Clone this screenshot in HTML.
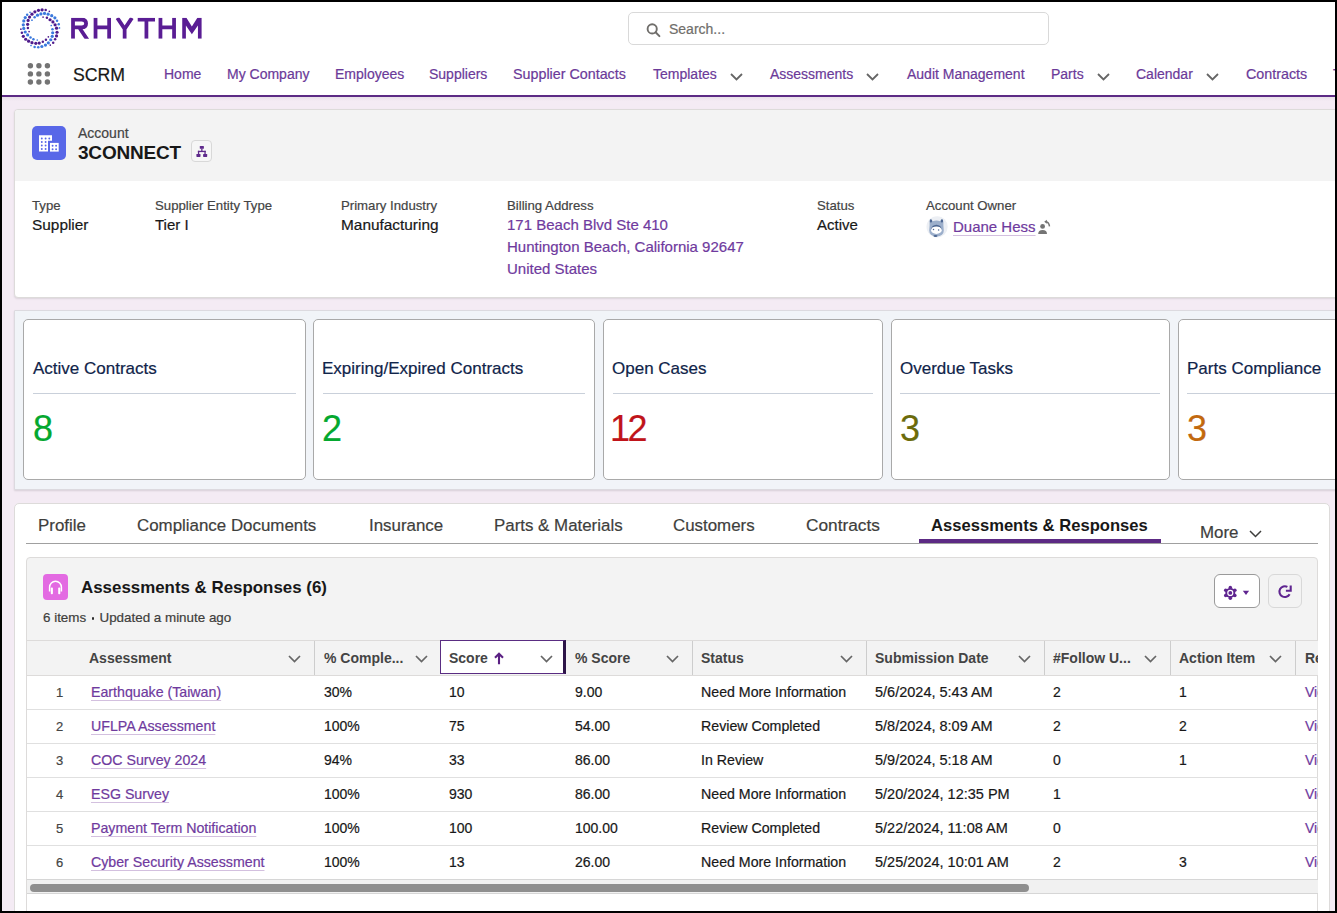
<!DOCTYPE html>
<html><head><meta charset="utf-8">
<style>
*{box-sizing:border-box;margin:0;padding:0}
html,body{width:1337px;height:913px;overflow:hidden;background:#f4ebf4}
body{font-family:"Liberation Sans",sans-serif;color:#181818;position:relative;-webkit-text-stroke:0.2px currentColor}
.th,[style*="bold"]{-webkit-text-stroke:0}
.a{position:absolute;white-space:nowrap}
.nav{position:absolute;top:66px;font-size:14px;color:#6b3a99;line-height:16px;white-space:nowrap}
.chev{position:absolute;width:13px;height:8px}
.lbl{position:absolute;font-size:13.2px;color:#444;line-height:15px;white-space:nowrap}
.val{position:absolute;font-size:15px;color:#181818;line-height:17px;white-space:nowrap}
.lnk{color:#6f3a9e}
.mc{position:absolute;top:319px;height:161px;background:#fff;border:1px solid #a9a9a9;border-radius:5px}
.mt{position:absolute;left:9px;top:40px;font-size:17px;color:#10244a;white-space:nowrap;line-height:18px}
.md{position:absolute;left:9px;right:9px;top:73px;height:1px;background:#c9d0da}
.mn{position:absolute;left:9px;top:90px;font-size:36px;line-height:38px}
.tab{position:absolute;top:516px;font-size:16.9px;color:#3e3e3c;line-height:19px;white-space:nowrap}
.th{position:absolute;top:650px;font-size:14px;font-weight:bold;color:#444;line-height:16px;white-space:nowrap}
.td{position:absolute;font-size:14px;color:#181818;line-height:16px;white-space:nowrap}
.td.lnk{color:#6f3a9e}
.rn{position:absolute;font-size:13px;color:#444;line-height:15px}
.ul{text-decoration:underline;text-decoration-color:#d3c0df;text-underline-offset:3px}
.vd{position:absolute;top:641px;width:1px;height:34px;background:#cdcdcd}
.hl{position:absolute;left:26px;width:1292px;height:1px;background:#e0e0e0}
.bb{position:absolute;background:#000;z-index:100}
</style></head><body>
<div class="a" style="left:0;top:0;width:1337px;height:95px;background:#fff"></div>
<div class="a" style="left:0;top:95px;width:1337px;height:2px;background:#5c2a84"></div>
<div class="a" style="left:0;top:97px;width:1337px;height:4px;background:linear-gradient(#e8dfe8,#f4ebf4)"></div>
<svg class="a" style="left:0;top:0" width="70" height="60"><g fill="#4f1b8c"><circle cx="49.33" cy="11.30" r="0.85"/><circle cx="45.71" cy="10.10" r="1.25"/><circle cx="42.10" cy="9.86" r="1.6"/><circle cx="38.48" cy="10.34" r="1.6"/><circle cx="34.87" cy="11.78" r="1.6"/><circle cx="31.98" cy="14.19" r="1.6"/><circle cx="29.57" cy="17.08" r="1.6"/><circle cx="28.12" cy="20.46" r="1.6"/><circle cx="27.64" cy="24.31" r="1.6"/><circle cx="27.88" cy="27.93" r="1.25"/><circle cx="29.08" cy="31.54" r="0.85"/><circle cx="43.06" cy="17.08" r="0.85"/><circle cx="46.92" cy="17.81" r="1.25"/><circle cx="50.05" cy="19.73" r="1.6"/><circle cx="52.94" cy="21.90" r="1.6"/><circle cx="55.11" cy="24.80" r="1.6"/><circle cx="56.55" cy="28.17" r="1.6"/><circle cx="57.04" cy="32.27" r="1.6"/><circle cx="56.55" cy="35.88" r="1.6"/><circle cx="55.11" cy="39.25" r="1.25"/><circle cx="53.18" cy="42.63" r="1.25"/><circle cx="50.29" cy="45.04" r="0.85"/><circle cx="20.89" cy="29.13" r="0.85"/><circle cx="21.86" cy="32.75" r="1.25"/><circle cx="23.30" cy="36.36" r="1.6"/><circle cx="25.71" cy="39.25" r="1.6"/><circle cx="28.60" cy="41.18" r="1.6"/><circle cx="31.98" cy="42.63" r="1.6"/><circle cx="35.83" cy="43.35" r="1.6"/><circle cx="39.20" cy="43.11" r="1.6"/><circle cx="42.82" cy="41.66" r="1.25"/><circle cx="45.95" cy="39.73" r="1.25"/><circle cx="48.36" cy="36.84" r="0.85"/></g><g fill="#3b79dd"><circle cx="30.05" cy="12.27" r="0.85"/><circle cx="27.16" cy="14.67" r="1.25"/><circle cx="25.23" cy="17.57" r="1.6"/><circle cx="23.78" cy="20.94" r="1.6"/><circle cx="23.30" cy="24.80" r="1.6"/><circle cx="23.78" cy="28.41" r="1.6"/><circle cx="25.23" cy="32.02" r="1.6"/><circle cx="27.64" cy="34.92" r="1.6"/><circle cx="30.53" cy="37.57" r="1.25"/><circle cx="33.42" cy="39.25" r="1.25"/><circle cx="37.28" cy="39.98" r="0.85"/><circle cx="31.98" cy="20.22" r="0.85"/><circle cx="34.63" cy="17.33" r="1.25"/><circle cx="37.52" cy="15.16" r="1.6"/><circle cx="40.89" cy="13.95" r="1.6"/><circle cx="44.51" cy="13.47" r="1.6"/><circle cx="48.12" cy="14.19" r="1.6"/><circle cx="51.73" cy="15.64" r="1.6"/><circle cx="54.87" cy="17.81" r="1.6"/><circle cx="57.04" cy="20.70" r="1.25"/><circle cx="58.72" cy="24.31" r="1.25"/><circle cx="59.45" cy="27.93" r="0.85"/><circle cx="51.25" cy="25.52" r="0.85"/><circle cx="52.46" cy="29.13" r="1.25"/><circle cx="52.70" cy="32.75" r="1.6"/><circle cx="52.22" cy="36.36" r="1.6"/><circle cx="50.77" cy="39.73" r="1.6"/><circle cx="48.36" cy="42.87" r="1.6"/><circle cx="45.47" cy="45.04" r="1.6"/><circle cx="41.86" cy="46.48" r="1.6"/><circle cx="38.24" cy="47.20" r="1.25"/><circle cx="34.63" cy="46.96" r="1.25"/><circle cx="31.01" cy="45.52" r="0.85"/></g></svg>
<svg class="a" style="left:0;top:0" width="220" height="60"><defs><clipPath id="rc"><rect x="0" y="75" width="1400" height="200"/></clipPath></defs><g transform="translate(66,10) scale(0.10471)" clip-path="url(#rc)" fill="none" stroke="#5a1d94" stroke-width="36" stroke-linejoin="miter"><path d="M67,275 V92 H150 Q192,92 192,128 Q192,165 150,165 H67 M128,170 L205,285"/><path d="M282,75 V275 M412,75 V275 M282,167 H412"/><path d="M490,75 L560,180 L630,75 M560,180 V275"/><path d="M685,92 H850 M768,92 V275"/><path d="M902,75 V275 M1032,75 V275 M902,167 H1032"/><path d="M1110,75 L1150,75 L1202,158 L1255,75 L1295,75 L1295,275 L1260,275 L1260,148 L1202,232 L1145,148 L1145,275 L1110,275Z" fill="#5a1d94" stroke="none"/></g></svg>
<div class="a" style="left:628px;top:12px;width:421px;height:33px;border:1px solid #d9d9d9;border-radius:5px;background:#fff"></div>
<svg class="a" style="left:645px;top:22px" width="17" height="17" viewBox="0 0 17 17"><circle cx="7.2" cy="6.9" r="4.6" fill="none" stroke="#706e6b" stroke-width="1.9"/><line x1="10.6" y1="10.3" x2="14.4" y2="14.1" stroke="#706e6b" stroke-width="2" stroke-linecap="round"/></svg>
<div class="a" style="left:669px;top:21px;font-size:14px;color:#706e6b;line-height:16px">Search...</div>
<svg class="a" style="left:26px;top:61px" width="26" height="26"><g fill="#747474"><circle cx="4.4" cy="4.8" r="2.7"/><circle cx="12.9" cy="4.8" r="2.7"/><circle cx="21.4" cy="4.8" r="2.7"/><circle cx="4.4" cy="12.9" r="2.7"/><circle cx="12.9" cy="12.9" r="2.7"/><circle cx="21.4" cy="12.9" r="2.7"/><circle cx="4.4" cy="21" r="2.7"/><circle cx="12.9" cy="21" r="2.7"/><circle cx="21.4" cy="21" r="2.7"/></g></svg>
<div class="a" style="left:73px;top:65px;font-size:17.7px;color:#181818;line-height:20px">SCRM</div>
<div class="nav" style="left:164px">Home</div>
<div class="nav" style="left:227px">My Company</div>
<div class="nav" style="left:335px">Employees</div>
<div class="nav" style="left:429px">Suppliers</div>
<div class="nav" style="left:513px;font-size:14.3px">Supplier Contacts</div>
<div class="nav" style="left:653px">Templates</div>
<svg class="chev" style="left:730px;top:73px" viewBox="0 0 13 8"><path d="M1 1 L6.5 6.5 L12 1" fill="none" stroke="#666" stroke-width="1.8"/></svg>
<div class="nav" style="left:770px">Assessments</div>
<svg class="chev" style="left:866px;top:73px" viewBox="0 0 13 8"><path d="M1 1 L6.5 6.5 L12 1" fill="none" stroke="#666" stroke-width="1.8"/></svg>
<div class="nav" style="left:907px">Audit Management</div>
<div class="nav" style="left:1051px">Parts</div>
<svg class="chev" style="left:1097px;top:73px" viewBox="0 0 13 8"><path d="M1 1 L6.5 6.5 L12 1" fill="none" stroke="#666" stroke-width="1.8"/></svg>
<div class="nav" style="left:1136px">Calendar</div>
<svg class="chev" style="left:1206px;top:73px" viewBox="0 0 13 8"><path d="M1 1 L6.5 6.5 L12 1" fill="none" stroke="#666" stroke-width="1.8"/></svg>
<div class="nav" style="left:1246px;font-size:14.3px">Contracts</div>
<div class="nav" style="left:1333px">T</div>

<!-- account card -->
<div class="a" style="left:14px;top:109px;width:1340px;height:189px;background:#fff;border:1px solid #dddbda;border-radius:4px;overflow:hidden;box-shadow:0 1px 2px rgba(0,0,0,0.1)">
 <div class="a" style="left:0;top:0;width:100%;height:71px;background:#f3f3f3"></div>
</div>
<div class="a" style="left:32px;top:126px;width:34px;height:34px;background:#5867e8;border-radius:5px"></div>
<svg class="a" style="left:32px;top:126px" width="34" height="34" viewBox="0 0 34 34"><g fill="#fff"><path d="M7,9.2 H20 V14.7 H16 V25.6 H7Z"/><rect x="18" y="16.9" width="8.7" height="8.7"/></g><g fill="#5867e8"><circle cx="9.8" cy="12.5" r="0.95"/><circle cx="13.6" cy="12.5" r="0.95"/><circle cx="17.3" cy="12.5" r="0.95"/><circle cx="9.8" cy="16" r="0.95"/><circle cx="13.6" cy="16" r="0.95"/><circle cx="9.8" cy="19.5" r="0.95"/><circle cx="13.6" cy="19.5" r="0.95"/><circle cx="9.8" cy="23" r="0.95"/><circle cx="13.6" cy="23" r="0.95"/><circle cx="20.6" cy="19.7" r="0.95"/><circle cx="24.1" cy="19.7" r="0.95"/><circle cx="20.6" cy="23.2" r="0.95"/><circle cx="24.1" cy="23.2" r="0.95"/></g></svg>
<div class="a" style="left:78px;top:125px;font-size:14px;color:#444;line-height:16px">Account</div>
<div class="a" style="left:78px;top:142px;font-size:19px;font-weight:bold;color:#181818;line-height:21px;letter-spacing:-0.2px">3CONNECT</div>
<div class="a" style="left:191px;top:140px;width:21px;height:22px;border:1px solid #d8d8d8;border-radius:4px;background:#f6f6f6"></div>
<svg class="a" style="left:195px;top:144px" width="14" height="14" viewBox="0 0 14 14"><g fill="#5f2a8c"><rect x="4.8" y="1.9" width="4.1" height="2.9" rx="0.6"/><rect x="1.4" y="9.9" width="4.1" height="3" rx="0.6"/><rect x="8.1" y="9.9" width="4.1" height="3" rx="0.6"/><rect x="6.2" y="4.5" width="1.3" height="2.6"/><rect x="2.9" y="6.8" width="7.8" height="1.3"/><rect x="2.9" y="6.8" width="1.3" height="3.3"/><rect x="9.4" y="6.8" width="1.3" height="3.3"/></g></svg>

<div class="lbl" style="left:32px;top:198px">Type</div>
<div class="val" style="left:32px;top:216px;font-size:15.4px">Supplier</div>
<div class="lbl" style="left:155px;top:198px">Supplier Entity Type</div>
<div class="val" style="left:155px;top:216px">Tier I</div>
<div class="lbl" style="left:341px;top:198px">Primary Industry</div>
<div class="val" style="left:341px;top:216px;font-size:15.4px">Manufacturing</div>
<div class="lbl" style="left:507px;top:198px">Billing Address</div>
<div class="val lnk" style="left:507px;top:216px">171 Beach Blvd Ste 410</div>
<div class="val lnk" style="left:507px;top:238px">Huntington Beach, California 92647</div>
<div class="val lnk" style="left:507px;top:260px">United States</div>
<div class="lbl" style="left:817px;top:198px">Status</div>
<div class="val" style="left:817px;top:216px">Active</div>
<div class="lbl" style="left:926px;top:198px">Account Owner</div>
<svg class="a" style="left:926px;top:216px" width="22" height="22" viewBox="0 0 22 22"><circle cx="11.1" cy="10.8" r="10.6" fill="#eceff4"/><path d="M3.6,9.5 Q3.4,4.8 4.6,3 L6.8,5.2 Q10.4,3.9 14.2,5.2 L16.2,3 Q17.6,4.8 17.4,9.5 L17.8,14.5 Q17.8,20 10.5,20.4 Q3.2,20 3.2,14.5Z" fill="#9cafcb"/><ellipse cx="4.9" cy="4.9" rx="1.2" ry="1.7" fill="#4d6792"/><ellipse cx="15.9" cy="4.9" rx="1.2" ry="1.7" fill="#4d6792"/><path d="M5.2,13.2 Q5.6,9.2 10.4,8.8 Q15.2,9.2 15.6,13.2Z" fill="#4d6792"/><ellipse cx="10.4" cy="14.2" rx="5.3" ry="3.7" fill="#fff"/><path d="M6,12.4 Q7,10.5 8.5,11.8 Q9.5,10.2 11,11.5 Q12.5,10.2 14.8,12.4" fill="#fff"/><circle cx="7.5" cy="13.6" r="0.75" fill="#4d6792"/><circle cx="12.6" cy="13.9" r="0.75" fill="#4d6792"/><ellipse cx="9.5" cy="20" rx="2" ry="1" fill="#4d6792"/></svg>
<div class="val lnk ul" style="left:953px;top:218px">Duane Hess</div>
<svg class="a" style="left:1036px;top:218px" width="16" height="18" viewBox="0 0 16 18"><g fill="#747474"><circle cx="6.6" cy="8.4" r="2.4"/><path d="M2.2,15.9 Q2.2,12.1 6.6,12.1 Q11,12.1 11,15.9Z"/><path d="M8.2,3.7 L10.9,1.7 L10.9,5.7Z"/></g><path d="M10,3.8 Q12.9,4.2 13.5,8.4" fill="none" stroke="#747474" stroke-width="1.5"/></svg>

<!-- metrics -->
<div class="a" style="left:14px;top:310px;width:1340px;height:180px;background:#f1f4f8;border:1px solid #dcdadf;border-radius:1px;box-shadow:0 1px 2px rgba(0,0,0,0.12)"></div>
<div class="mc" style="left:23px;width:283px"><div class="mt">Active Contracts</div><div class="md"></div><div class="mn" style="color:#04a82f">8</div></div>
<div class="mc" style="left:313px;width:282px"><div class="mt" style="left:8px">Expiring/Expired Contracts</div><div class="md"></div><div class="mn" style="color:#04a82f;left:8px">2</div></div>
<div class="mc" style="left:603px;width:280px"><div class="mt" style="left:8px">Open Cases</div><div class="md"></div><div class="mn" style="color:#c0141a;letter-spacing:-2.5px;left:6px">12</div></div>
<div class="mc" style="left:891px;width:279px"><div class="mt" style="left:8px">Overdue Tasks</div><div class="md" style="left:8px"></div><div class="mn" style="color:#6b6b0b;left:8px">3</div></div>
<div class="mc" style="left:1178px;width:280px"><div class="mt" style="left:8px">Parts Compliance</div><div class="md" style="left:8px"></div><div class="mn" style="color:#c2690f;left:8px">3</div></div>

<!-- tabs card -->
<div class="a" style="left:14px;top:503px;width:1316px;height:420px;background:#fff;border:1px solid #dddbda;border-radius:5px"></div>
<div class="tab" style="left:38px">Profile</div>
<div class="tab" style="left:137px">Compliance Documents</div>
<div class="tab" style="left:369px">Insurance</div>
<div class="tab" style="left:494px">Parts &amp; Materials</div>
<div class="tab" style="left:673px">Customers</div>
<div class="tab" style="left:806px;font-size:17.3px">Contracts</div>
<div class="tab" style="left:931px;font-weight:bold;color:#181818;font-size:16.6px">Assessments &amp; Responses</div>
<div class="tab" style="left:1200px;top:523px">More</div>
<svg class="chev" style="left:1249px;top:530px" viewBox="0 0 13 8"><path d="M1 1 L6.5 6.5 L12 1" fill="none" stroke="#3e3e3c" stroke-width="1.5"/></svg>
<div class="a" style="left:26px;top:543px;width:1292px;height:1px;background:#a0a0a0"></div>
<div class="a" style="left:919px;top:539px;width:242px;height:4px;background:#5c2a84"></div>

<!-- related list -->
<div class="a" style="left:26px;top:557px;width:1292px;height:400px;background:#f3f3f3;border:1px solid #dddbda;border-radius:4px"></div>
<div class="a" style="left:43px;top:574px;width:25px;height:26px;background:#e36ae2;border-radius:4px"></div>
<svg class="a" style="left:43px;top:574px" width="25" height="26" viewBox="0 0 25 26"><path d="M6.6,17.5 V13.2 A5.9,5.9 0 0 1 18.4,13.2 V17.5" fill="none" stroke="#fff" stroke-width="1.5"/><rect x="7.8" y="13.6" width="2.1" height="6.6" rx="0.8" fill="#fff"/><rect x="15.2" y="13.6" width="2.1" height="6.6" rx="0.8" fill="#fff"/></svg>
<div class="a" style="left:81px;top:578px;font-size:16.9px;font-weight:bold;color:#181818;line-height:20px">Assessments &amp; Responses (6)</div>
<div class="a" style="left:43px;top:610px;font-size:13.4px;color:#3e3e3c;line-height:15px">6 items<span style="display:inline-block;width:2.8px;height:2.8px;border-radius:50%;background:#2b2b2b;margin:0 5px 0 5.5px;vertical-align:2.5px"></span>Updated a minute ago</div>
<div class="a" style="left:1214px;top:574px;width:46px;height:34px;background:#fff;border:1.5px solid #9a9a9a;border-radius:6px"></div>
<svg class="a" style="left:1214px;top:574px" width="46" height="34" viewBox="0 0 46 34"><g fill="#5f2590"><circle cx="16.3" cy="18.9" r="5"/><circle cx="16.30" cy="13.60" r="1.75"/><circle cx="20.89" cy="16.25" r="1.75"/><circle cx="20.89" cy="21.55" r="1.75"/><circle cx="16.30" cy="24.20" r="1.75"/><circle cx="11.71" cy="16.25" r="1.75"/><circle cx="11.71" cy="21.55" r="1.75"/></g><circle cx="16.3" cy="18.9" r="3.1" fill="#fff"/><circle cx="16.3" cy="18.9" r="1.9" fill="#5f2590"/><path d="M28.8,16.8 L35.1,16.8 L32,21Z" fill="#5f2590"/></svg>
<div class="a" style="left:1268px;top:574px;width:34px;height:34px;background:#f3f3f3;border:1px solid #d8d8d8;border-radius:6px"></div>
<svg class="a" style="left:1268px;top:574px" width="34" height="34" viewBox="0 0 34 34"><path d="M19.4,12.9 A5.4,5.4 0 1 0 21.6,20.2" fill="none" stroke="#5f2590" stroke-width="2.1"/><path d="M17.9,16.7 H22.7 V11.6" fill="none" stroke="#5f2590" stroke-width="2.1"/></svg>

<!-- table --><div class="a" style="left:0;top:0;width:1318px;height:913px;overflow:hidden">
<div class="a" style="left:27px;top:640px;width:1291px;height:36px;background:#f3f3f3;border-top:1px solid #dddbda;border-bottom:1px solid #dddbda"></div>
<div class="a" style="left:27px;top:676px;width:1290px;height:240px;background:#fff"></div>
<div class="th" style="left:89px">Assessment</div>
<svg class="chev" style="left:288px;top:655px" viewBox="0 0 13 8"><path d="M1 1 L6.5 6.5 L12 1" fill="none" stroke="#666" stroke-width="1.7"/></svg>
<div class="vd" style="left:314px"></div>
<div class="th" style="left:324px">% Comple...</div>
<svg class="chev" style="left:415px;top:655px" viewBox="0 0 13 8"><path d="M1 1 L6.5 6.5 L12 1" fill="none" stroke="#666" stroke-width="1.7"/></svg>
<div class="a" style="left:440px;top:640px;width:126px;height:34px;background:#fff;border:1.5px solid #5a2d82;border-right:3.5px solid #2d1548"></div>
<div class="th" style="left:449px">Score</div><svg class="a" style="left:493px;top:652px" width="12" height="13" viewBox="0 0 12 13"><path d="M6,12.2 V2.5 M2,5.8 L6,1.8 L10,5.8" fill="none" stroke="#5a2083" stroke-width="2.1"/></svg>
<svg class="chev" style="left:540px;top:655px" viewBox="0 0 13 8"><path d="M1 1 L6.5 6.5 L12 1" fill="none" stroke="#666" stroke-width="1.7"/></svg>
<div class="th" style="left:575px">% Score</div>
<svg class="chev" style="left:666px;top:655px" viewBox="0 0 13 8"><path d="M1 1 L6.5 6.5 L12 1" fill="none" stroke="#666" stroke-width="1.7"/></svg>
<div class="vd" style="left:692px"></div>
<div class="th" style="left:701px">Status</div>
<svg class="chev" style="left:840px;top:655px" viewBox="0 0 13 8"><path d="M1 1 L6.5 6.5 L12 1" fill="none" stroke="#666" stroke-width="1.7"/></svg>
<div class="vd" style="left:866px"></div>
<div class="th" style="left:875px">Submission Date</div>
<svg class="chev" style="left:1018px;top:655px" viewBox="0 0 13 8"><path d="M1 1 L6.5 6.5 L12 1" fill="none" stroke="#666" stroke-width="1.7"/></svg>
<div class="vd" style="left:1044px"></div>
<div class="th" style="left:1053px">#Follow U...</div>
<svg class="chev" style="left:1144px;top:655px" viewBox="0 0 13 8"><path d="M1 1 L6.5 6.5 L12 1" fill="none" stroke="#666" stroke-width="1.7"/></svg>
<div class="vd" style="left:1170px"></div>
<div class="th" style="left:1179px">Action Item</div>
<svg class="chev" style="left:1269px;top:655px" viewBox="0 0 13 8"><path d="M1 1 L6.5 6.5 L12 1" fill="none" stroke="#666" stroke-width="1.7"/></svg>
<div class="vd" style="left:1295px"></div>
<div class="th" style="left:1305px">Re</div>
<div class="rn" style="left:56px;top:685px">1</div>
<div class="td lnk ul" style="left:91px;top:684px;font-size:14.2px">Earthquake (Taiwan)</div>
<div class="td" style="left:324px;top:684px">30%</div>
<div class="td" style="left:449px;top:684px">10</div>
<div class="td" style="left:575px;top:684px">9.00</div>
<div class="td" style="left:701px;top:684px;font-size:14.2px">Need More Information</div>
<div class="td" style="left:875px;top:684px;font-size:14.5px">5/6/2024, 5:43 AM</div>
<div class="td" style="left:1053px;top:684px">2</div>
<div class="td" style="left:1179px;top:684px">1</div>
<div class="td lnk" style="left:1305px;top:684px">View</div>
<div class="hl" style="left:27px;top:709px"></div>
<div class="rn" style="left:56px;top:719px">2</div>
<div class="td lnk ul" style="left:91px;top:718px;font-size:14.2px">UFLPA Assessment</div>
<div class="td" style="left:324px;top:718px">100%</div>
<div class="td" style="left:449px;top:718px">75</div>
<div class="td" style="left:575px;top:718px">54.00</div>
<div class="td" style="left:701px;top:718px;font-size:14.2px">Review Completed</div>
<div class="td" style="left:875px;top:718px;font-size:14.5px">5/8/2024, 8:09 AM</div>
<div class="td" style="left:1053px;top:718px">2</div>
<div class="td" style="left:1179px;top:718px">2</div>
<div class="td lnk" style="left:1305px;top:718px">View</div>
<div class="hl" style="left:27px;top:743px"></div>
<div class="rn" style="left:56px;top:753px">3</div>
<div class="td lnk ul" style="left:91px;top:752px;font-size:14.2px">COC Survey 2024</div>
<div class="td" style="left:324px;top:752px">94%</div>
<div class="td" style="left:449px;top:752px">33</div>
<div class="td" style="left:575px;top:752px">86.00</div>
<div class="td" style="left:701px;top:752px;font-size:14.2px">In Review</div>
<div class="td" style="left:875px;top:752px;font-size:14.5px">5/9/2024, 5:18 AM</div>
<div class="td" style="left:1053px;top:752px">0</div>
<div class="td" style="left:1179px;top:752px">1</div>
<div class="td lnk" style="left:1305px;top:752px">View</div>
<div class="hl" style="left:27px;top:777px"></div>
<div class="rn" style="left:56px;top:787px">4</div>
<div class="td lnk ul" style="left:91px;top:786px;font-size:14.2px">ESG Survey</div>
<div class="td" style="left:324px;top:786px">100%</div>
<div class="td" style="left:449px;top:786px">930</div>
<div class="td" style="left:575px;top:786px">86.00</div>
<div class="td" style="left:701px;top:786px;font-size:14.2px">Need More Information</div>
<div class="td" style="left:875px;top:786px;font-size:14.5px">5/20/2024, 12:35 PM</div>
<div class="td" style="left:1053px;top:786px">1</div>
<div class="td lnk" style="left:1305px;top:786px">View</div>
<div class="hl" style="left:27px;top:811px"></div>
<div class="rn" style="left:56px;top:821px">5</div>
<div class="td lnk ul" style="left:91px;top:820px;font-size:14.2px">Payment Term Notification</div>
<div class="td" style="left:324px;top:820px">100%</div>
<div class="td" style="left:449px;top:820px">100</div>
<div class="td" style="left:575px;top:820px">100.00</div>
<div class="td" style="left:701px;top:820px;font-size:14.2px">Review Completed</div>
<div class="td" style="left:875px;top:820px;font-size:14.5px">5/22/2024, 11:08 AM</div>
<div class="td" style="left:1053px;top:820px">0</div>
<div class="td lnk" style="left:1305px;top:820px">View</div>
<div class="hl" style="left:27px;top:845px"></div>
<div class="rn" style="left:56px;top:855px">6</div>
<div class="td lnk ul" style="left:91px;top:854px;font-size:14.2px">Cyber Security Assessment</div>
<div class="td" style="left:324px;top:854px">100%</div>
<div class="td" style="left:449px;top:854px">13</div>
<div class="td" style="left:575px;top:854px">26.00</div>
<div class="td" style="left:701px;top:854px;font-size:14.2px">Need More Information</div>
<div class="td" style="left:875px;top:854px;font-size:14.5px">5/25/2024, 10:01 AM</div>
<div class="td" style="left:1053px;top:854px">2</div>
<div class="td" style="left:1179px;top:854px">3</div>
<div class="td lnk" style="left:1305px;top:854px">View</div>
<div class="hl" style="left:27px;top:879px"></div>
<div class="a" style="left:27px;top:879px;width:1291px;height:15px;background:#f1f1f1;border-top:1px solid #d6d6d6;border-bottom:1px solid #d6d6d6"></div>
<div class="a" style="left:30px;top:884px;width:999px;height:8px;background:#8f8f8f;border-radius:4px"></div>
</div>


<div class="bb" style="left:0;top:0;width:1337px;height:2px"></div>
<div class="bb" style="left:0;top:911px;width:1337px;height:2px"></div>
<div class="bb" style="left:0;top:0;width:2px;height:913px"></div>
<div class="bb" style="left:1335px;top:0;width:2px;height:913px"></div>
</body></html>
